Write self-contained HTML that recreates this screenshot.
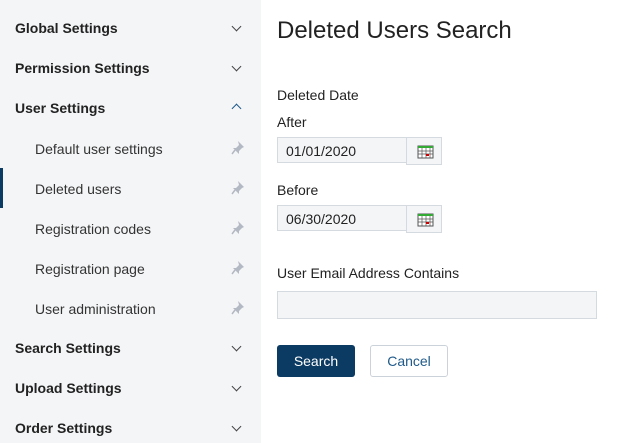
<!DOCTYPE html><html><head><style>
body{margin:0;width:627px;height:443px;font-family:"Liberation Sans",sans-serif;background:#fff;position:relative;overflow:hidden;color:#222}
.side{position:absolute;left:0;top:0;width:261px;height:443px;background:#f4f5f7}
.h{position:absolute;left:15px;font-size:14px;font-weight:bold;color:#222}
.s{position:absolute;left:35px;font-size:14px;color:#333}
.chev{position:absolute;left:233px;width:6px;height:6px;border-right:1.7px solid #444;border-bottom:1.7px solid #444;transform:rotate(45deg)}
.up{transform:rotate(-135deg);border-color:#1f5a8a}
.pin{position:absolute;left:231px}
.t{position:absolute;font-size:14px;color:#222}
.inp{position:absolute;left:277px;height:26px;border:1px solid #d5dae0;background:#f4f5f7;font-size:14px;line-height:26px;padding-left:8px;box-sizing:border-box;width:130px}
.cal{position:absolute;left:406px;width:36px;height:28px;border:1px solid #d5dae0;box-sizing:border-box;background:#f4f5f7}
</style></head><body>
<div class="side">
<div class="h" style="top:20px">Global Settings</div><div class="chev" style="top:23px"></div>
<div class="h" style="top:60px">Permission Settings</div><div class="chev" style="top:63px"></div>
<div class="h" style="top:100px">User Settings</div><div class="chev up" style="top:105px"></div>
<div class="s" style="top:141px">Default user settings</div>
<div style="position:absolute;left:0;top:168px;width:3px;height:40px;background:#0b3a63"></div>
<div class="s" style="top:181px">Deleted users</div>
<div class="s" style="top:221px">Registration codes</div>
<div class="s" style="top:261px">Registration page</div>
<div class="s" style="top:301px">User administration</div>
<svg class="pin" style="top:140px" width="14" height="16"><path d="M7 1l6 6-2 1-3 3 0 3-6-6 3 0 3-3z" fill="#b3b9c2"/><path d="M4 10l-3 4" stroke="#b3b9c2" stroke-width="1.5"/></svg>
<svg class="pin" style="top:180px" width="14" height="16"><path d="M7 1l6 6-2 1-3 3 0 3-6-6 3 0 3-3z" fill="#b3b9c2"/><path d="M4 10l-3 4" stroke="#b3b9c2" stroke-width="1.5"/></svg>
<svg class="pin" style="top:220px" width="14" height="16"><path d="M7 1l6 6-2 1-3 3 0 3-6-6 3 0 3-3z" fill="#b3b9c2"/><path d="M4 10l-3 4" stroke="#b3b9c2" stroke-width="1.5"/></svg>
<svg class="pin" style="top:260px" width="14" height="16"><path d="M7 1l6 6-2 1-3 3 0 3-6-6 3 0 3-3z" fill="#b3b9c2"/><path d="M4 10l-3 4" stroke="#b3b9c2" stroke-width="1.5"/></svg>
<svg class="pin" style="top:300px" width="14" height="16"><path d="M7 1l6 6-2 1-3 3 0 3-6-6 3 0 3-3z" fill="#b3b9c2"/><path d="M4 10l-3 4" stroke="#b3b9c2" stroke-width="1.5"/></svg>
<div class="h" style="top:340px">Search Settings</div><div class="chev" style="top:343px"></div>
<div class="h" style="top:380px">Upload Settings</div><div class="chev" style="top:383px"></div>
<div class="h" style="top:420px">Order Settings</div><div class="chev" style="top:423px"></div>
</div>
<div class="t" style="left:277px;top:17px;font-size:24px;color:#222">Deleted Users Search</div>
<div class="t" style="left:277px;top:87px">Deleted Date</div>
<div class="t" style="left:277px;top:114px">After</div>
<div class="inp" style="top:137px">01/01/2020</div>
<div class="cal" style="top:137px"><svg width="36" height="28"><rect x="11" y="8" width="15" height="12" fill="#fff" stroke="#555"/><rect x="11" y="8" width="15" height="2" fill="#3a3"/><path d="M11 13h15M11 16h15M15 10v10M19 10v10M23 10v10" stroke="#555" stroke-width=".7"/><rect x="19" y="16" width="3" height="2" fill="#c00"/></svg></div>
<div class="t" style="left:277px;top:182px">Before</div>
<div class="inp" style="top:205px">06/30/2020</div>
<div class="cal" style="top:205px"><svg width="36" height="28"><rect x="11" y="8" width="15" height="12" fill="#fff" stroke="#555"/><rect x="11" y="8" width="15" height="2" fill="#3a3"/><path d="M11 13h15M11 16h15M15 10v10M19 10v10M23 10v10" stroke="#555" stroke-width=".7"/><rect x="19" y="16" width="3" height="2" fill="#c00"/></svg></div>
<div class="t" style="left:277px;top:265px">User Email Address Contains</div>
<div style="position:absolute;left:277px;top:291px;width:320px;height:28px;border:1px solid #d5dae0;background:#f4f5f7;box-sizing:border-box"></div>
<div style="position:absolute;left:277px;top:345px;width:78px;height:32px;background:#0b3a63;color:#fff;border-radius:3px;font-size:14px;text-align:center;line-height:32px">Search</div>
<div style="position:absolute;left:370px;top:345px;width:78px;height:32px;border:1px solid #ccd2d9;box-sizing:border-box;color:#1f5a8a;border-radius:3px;font-size:14px;text-align:center;line-height:30px">Cancel</div>
</body></html>
